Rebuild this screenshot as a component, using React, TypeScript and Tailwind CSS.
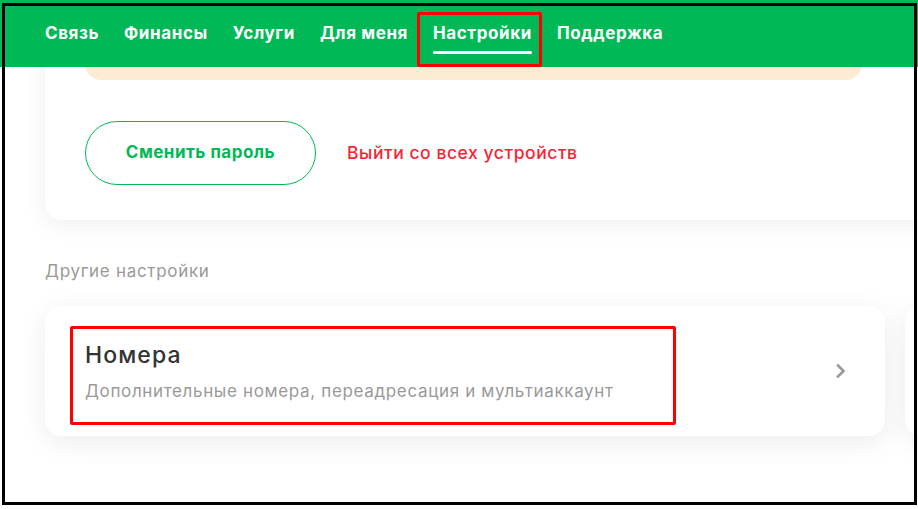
import React from 'react';

const navItems = ['Связь', 'Финансы', 'Услуги', 'Для меня', 'Настройки', 'Поддержка'];

const Chevron: React.FC = () => (
  <svg width="12" height="16" viewBox="0 0 12 16" fill="none">
    <path d="M3 2.5 L8.5 8 L3 13.5" stroke="#999999" strokeWidth="2.6" strokeLinecap="square" />
  </svg>
);

export default function App() {
  return (
    <div
      className="relative w-[918px] h-[509px] overflow-hidden bg-white"
      style={{ fontFamily: 'Inter, "Noto Sans", sans-serif' }}
    >
      {/* top nav */}
      <nav className="relative z-10 h-[67px] bg-[#00b956] flex items-center pl-[45px] gap-[25px]">
        {navItems.map((item) => (
          <div key={item} className="relative h-full flex items-center">
            <span className="text-white font-bold text-[17px] tracking-[0.6px]">{item}</span>
            {item === 'Настройки' && (
              <span className="absolute left-0 right-0 top-[51px] h-[3px] rounded-full bg-white" />
            )}
          </div>
        ))}
      </nav>

      <div className="pl-[45px]">
        {/* security card (scrolled) */}
        <div className="-mt-[20px] w-[900px] rounded-b-[16px] bg-white shadow-[0_4px_24px_rgba(0,0,0,0.07)] px-[40px] pb-[35px]">
          <div className="h-[33px] w-[777px] rounded-b-[16px] bg-[#fdecd4]" />
          <div className="mt-[41px] flex items-center gap-[31px]">
            <button className="h-[64px] w-[231px] rounded-full border border-[#00b956] text-[#00b956] font-bold text-[17px] tracking-[0.5px]">
              Сменить пароль
            </button>
            <span className="text-[#f62434] font-medium text-[17.5px] tracking-[0.55px]">Выйти со всех устройств</span>
          </div>
        </div>

        <div className="mt-[39px] text-[#999999] text-[17px] leading-[24px] tracking-[0.7px]">Другие настройки</div>

        <div className="mt-[23px] flex gap-[20px]">
          <div className="w-[840px] shrink-0 h-[130px] rounded-[16px] bg-white shadow-[0_6px_28px_rgba(0,0,0,0.08)] pl-[40px] pr-[38px] flex items-center justify-between">
            <div className="pt-[2px]">
              <div className="text-[#333333] font-medium text-[23px] leading-[28px] tracking-[1.1px]">Номера</div>
              <div className="mt-[10px] text-[#999999] text-[17px] leading-[24px] tracking-[0.65px]">
                Дополнительные номера, переадресация и мультиаккаунт
              </div>
            </div>
            <Chevron />
          </div>
          <div className="w-[300px] shrink-0 h-[130px] rounded-[16px] bg-white shadow-[0_6px_28px_rgba(0,0,0,0.08)]" />
        </div>
      </div>

      {/* annotation overlays */}
      <div className="absolute left-[417px] top-[12px] w-[125px] h-[55px] border-[3px] border-[#ff0000] rounded-[2px] z-20" />
      <div className="absolute left-[70px] top-[326px] w-[606px] h-[99px] border-[3px] border-[#ff0000] rounded-[2px] z-20" />
      <div className="absolute left-[2px] top-[3px] right-[1px] bottom-[4px] border-[3px] border-black z-30 pointer-events-none" />
    </div>
  );
}
